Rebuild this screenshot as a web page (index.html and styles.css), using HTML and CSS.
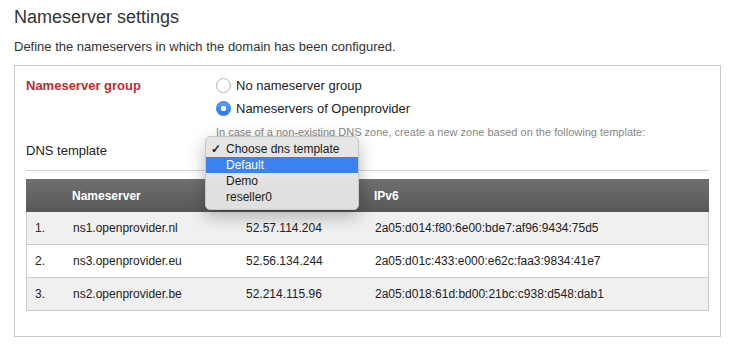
FILE: index.html
```html
<!DOCTYPE html>
<html>
<head>
<meta charset="utf-8">
<link rel="stylesheet" href="styles.css">
</head>
<body>
<h1 class="title">Nameserver settings</h1>
<p class="desc">Define the nameservers in which the domain has been configured.</p>
<div class="box">
  <div class="form-row group-row">
    <div class="label label-red">Nameserver group</div>
    <div class="field">
      <label class="radio-line"><span class="radio"></span>No nameserver group</label>
      <label class="radio-line"><span class="radio radio-on"></span>Nameservers of Openprovider</label>
      <div class="help">In case of a non-existing DNS zone, create a new zone based on the following template:</div>
    </div>
  </div>
  <div class="form-row dns-row">
    <div class="label">DNS template</div>
    <div class="field field-select">
      <div class="menu">
        <div class="menu-item"><span class="check">✓</span>Choose dns template</div>
        <div class="menu-item menu-active">Default</div>
        <div class="menu-item">Demo</div>
        <div class="menu-item">reseller0</div>
      </div>
    </div>
  </div>
  <div class="rule"></div>
  <div class="table">
    <div class="thead">
      <div class="c c1"></div>
      <div class="c c2">Nameserver</div>
      <div class="c c3"></div>
      <div class="c c4">IPv6</div>
    </div>
    <div class="tr odd">
      <div class="c c1">1.</div>
      <div class="c c2">ns1.openprovider.nl</div>
      <div class="c c3">52.57.114.204</div>
      <div class="c c4">2a05:d014:f80:6e00:bde7:af96:9434:75d5</div>
    </div>
    <div class="tr">
      <div class="c c1">2.</div>
      <div class="c c2">ns3.openprovider.eu</div>
      <div class="c c3">52.56.134.244</div>
      <div class="c c4">2a05:d01c:433:e000:e62c:faa3:9834:41e7</div>
    </div>
    <div class="tr odd">
      <div class="c c1">3.</div>
      <div class="c c2">ns2.openprovider.be</div>
      <div class="c c3">52.214.115.96</div>
      <div class="c c4">2a05:d018:61d:bd00:21bc:c938:d548:dab1</div>
    </div>
  </div>
</div>
</body>
</html>
```
FILE: styles.css
```css
html, body {
  margin: 0;
  background: #ffffff;
}
body {
  padding: 6px 14px 0 14px;
  font-family: "Liberation Sans", Arial, sans-serif;
  color: #333333;
}
.title {
  margin: 0;
  font-size: 18px;
  line-height: 22px;
  font-weight: normal;
  color: #333333;
}
.desc {
  margin: 11px 0 0 0;
  font-size: 13px;
  line-height: 16px;
  color: #333333;
}
.box {
  margin-top: 10px;
  width: 707px;
  box-sizing: border-box;
  border: 1px solid #c8c8c8;
  padding: 8px 11px 25px 11px;
}
.form-row {
  display: grid;
  grid-template-columns: 190px 1fr;
}
.label {
  font-size: 13px;
  line-height: 23px;
  color: #222222;
}
.label-red {
  color: #c42b2b;
  font-weight: bold;
}
.radio-line {
  display: flex;
  align-items: center;
  gap: 5px;
  font-size: 13px;
  line-height: 23px;
  color: #222222;
}
.radio {
  width: 13px;
  height: 13px;
  border-radius: 50%;
  border: 1px solid #b5b5b5;
  background: #ffffff;
  box-sizing: content-box;
  flex: none;
}
.radio-on {
  border-color: #2c7bf0;
  background: radial-gradient(circle, #ffffff 0 2.5px, transparent 3px), linear-gradient(#5aa0fb, #2a78f2);
}
.help {
  margin-top: 5px;
  font-size: 11px;
  line-height: 14px;
  color: #888888;
}
.dns-row {
  margin-top: 4px;
}
.dns-row .label {
  line-height: 16px;
}
.field-select {
  position: relative;
  height: 16px;
}
.menu {
  position: absolute;
  left: -11px;
  top: -7px;
  width: 154px;
  padding: 4px 0;
  background: rgba(228, 228, 228, 0.97);
  border: 1px solid #c6c6c6;
  border-radius: 5px;
  box-shadow: 0 6px 18px rgba(0, 0, 0, 0.28);
  box-sizing: border-box;
  z-index: 5;
}
.menu-item {
  position: relative;
  height: 16px;
  line-height: 16px;
  padding-left: 20px;
  font-size: 12px;
  color: #1a1a1a;
}
.check {
  position: absolute;
  left: 5px;
  top: 0;
  font-size: 12px;
  font-weight: bold;
}
.menu-active {
  background: #3b82f0;
  color: #ffffff;
}
.rule {
  margin-top: 11px;
  border-top: 1px solid #d4d4d4;
}
.table {
  margin-top: 8px;
  font-size: 12px;
}
.thead, .tr {
  display: grid;
  grid-template-columns: 46px 173px 129px 1fr;
  align-items: center;
}
.thead {
  height: 33px;
  background: linear-gradient(#707070, #575757);
  color: #ffffff;
  font-weight: bold;
}
.tr {
  height: 32px;
  border-left: 1px solid #cccccc;
  border-right: 1px solid #cccccc;
  border-bottom: 1px solid #cccccc;
  color: #222222;
  background: #ffffff;
}
.tr.odd {
  background: #f0f0f0;
}
.c1 {
  padding-left: 8px;
}
```
